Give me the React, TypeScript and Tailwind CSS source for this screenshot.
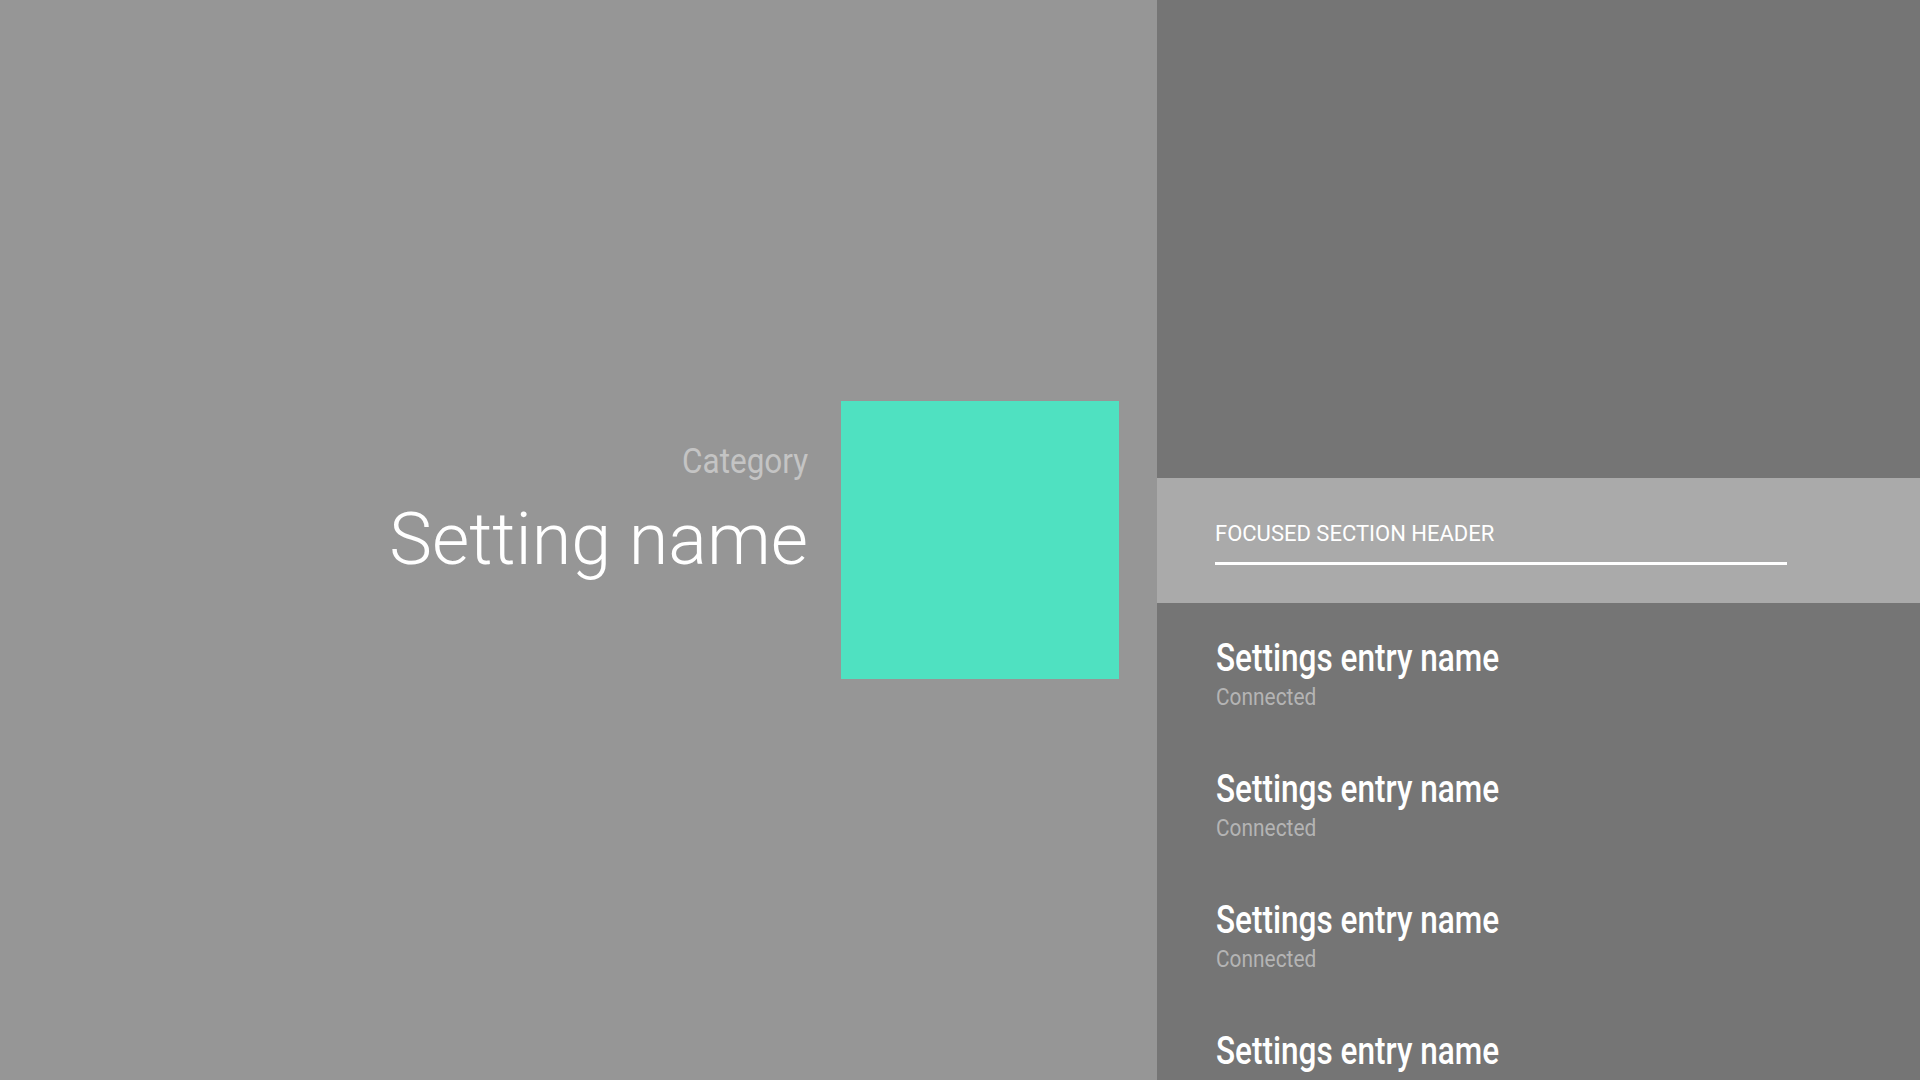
const entries = ["Settings entry name", "Settings entry name", "Settings entry name", "Settings entry name"];

export default function App() {
  return (
    <div className="w-[1920px] h-[1080px] flex overflow-hidden" style={{ fontFamily: "Roboto, 'Noto Sans', sans-serif" }}>
      {/* left: setting title + image */}
      <div className="w-[1157px] h-full bg-[#969696] flex items-center justify-end pr-[38px] gap-[33px]">
        <div className="self-center h-[278px] flex flex-col items-end">
          <div className="mt-[41px] text-[35px] leading-[40px] text-[#c4c4c4] origin-right scale-x-[0.9]">Category</div>
          <div className="mt-[13px] text-[72px] leading-[90px] font-light text-white">Setting name</div>
        </div>
        <div className="w-[278px] h-[278px] bg-[#4fe1c1]" />
      </div>

      {/* right: list */}
      <div className="flex-1 h-full bg-[#757575] flex flex-col">
        <div className="h-[478px] shrink-0" />
        <div className="h-[125px] shrink-0 bg-[#aaaaaa] pl-[58px] pt-[42px]">
          <div className="text-[22px] leading-[28px] text-white">FOCUSED SECTION HEADER</div>
          <div className="mt-[14px] w-[572px] h-[3px] bg-white" />
        </div>
        <div className="pl-[59px] pt-[33px] flex flex-col gap-[55px]">
          {entries.map((e, i) => (
            <div key={i} className="flex flex-col items-start">
              <div className="text-[38px] leading-[44px] font-medium text-white origin-left scale-x-[0.83] whitespace-nowrap">{e}</div>
              <div className="mt-[2px] text-[24px] leading-[30px] text-[#b4b4b4] origin-left scale-x-[0.87]">Connected</div>
            </div>
          ))}
        </div>
      </div>
    </div>
  );
}
